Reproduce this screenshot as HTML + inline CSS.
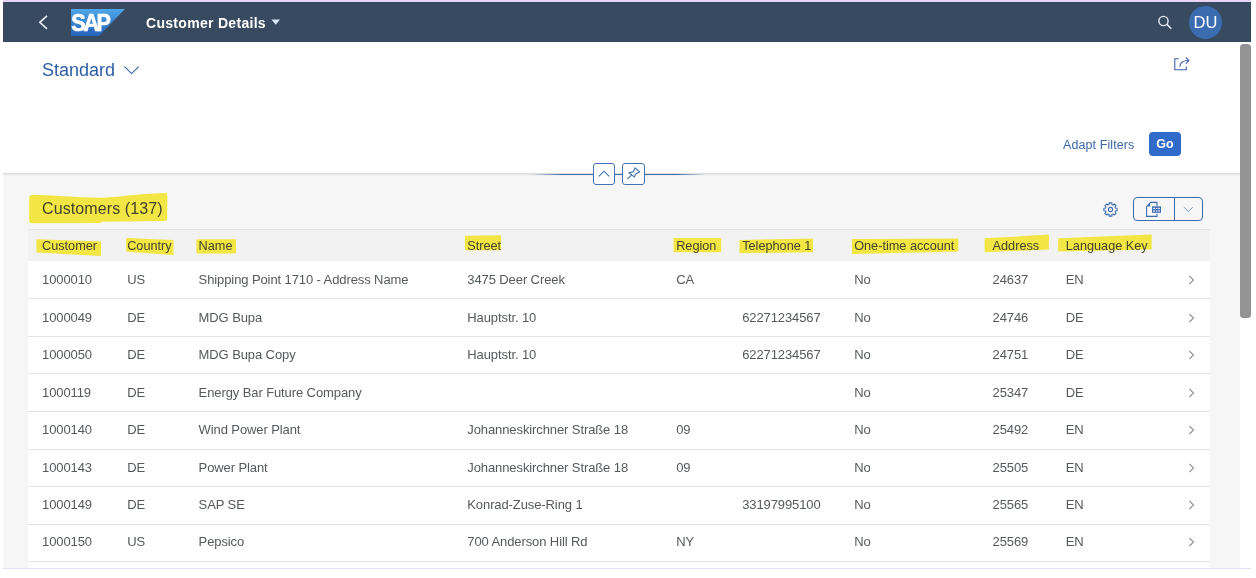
<!DOCTYPE html>
<html><head><meta charset="utf-8">
<style>
*{box-sizing:border-box;margin:0;padding:0}
html,body{will-change:transform;width:1256px;height:578px;overflow:hidden;background:#fff;font-family:"Liberation Sans",sans-serif;color:#32363a}
.abs{position:absolute}
#pink{left:3px;top:0;width:1248px;height:2px;background:#ebd3f6}
#shell{left:3px;top:2px;width:1248px;height:40px;background:#384a60}
#title{left:146px;top:14.5px;font-size:14px;font-weight:bold;color:#fff;white-space:nowrap;line-height:16px;letter-spacing:0.3px}
#avatar{left:1189px;top:6px;width:33px;height:33px;border-radius:50%;background:#3b6cb0;color:#fff;font-size:16.5px;text-align:center;line-height:33px}
#std{left:42px;top:60px;font-size:18px;color:#2d5ea8;line-height:20px;white-space:nowrap}
#adapt{left:1063px;top:138px;font-size:12.5px;color:#3d69aa;letter-spacing:0.1px;line-height:14px;white-space:nowrap}
#go{left:1149px;top:132px;width:32px;height:24px;border-radius:4px;background:#306bc9;color:#fff;font-weight:bold;font-size:12.5px;text-align:center;line-height:25.5px}
#gray{left:3px;top:174px;width:1237px;height:394px;background:#f6f6f6}
#shadow{left:3px;top:173.4px;width:1237px;height:2.6px;background:linear-gradient(#d9d9d9,#ececec 60%,#f5f5f5)}
#fline{left:500px;top:174px;width:240px;height:1px;background:linear-gradient(90deg,rgba(61,109,177,0) 30px,#3d6db1 62px,#3d6db1 176px,rgba(61,109,177,0) 206px)}
.sqbtn{width:22px;height:22.3px;border:1px solid #4672b4;border-radius:3px;background:#fff}
#scroll{left:1240px;top:43.5px;width:11px;height:274px;border-radius:3.5px;background:#939393}
#bline{left:3px;top:567.5px;width:1248px;height:1px;background:#dfe2f2}
.hl{background:#f2e644;border-radius:2px}
#ctitle{left:42px;top:199.6px;font-size:16px;color:#44422a;line-height:18px;white-space:nowrap;letter-spacing:0.1px}
#split{left:1132.5px;top:197.4px;width:70.5px;height:23.4px;border:1px solid #3d6db1;border-radius:4px}
#thead{background:#f2f2f2;border-top:1px solid #e5e5e5}
.row{left:28px;width:1182px;height:37.66px;background:#fff;border-bottom:1px solid #e5e5e5}
.c{position:absolute;top:0px;font-size:13px;letter-spacing:-0.1px;line-height:37px;white-space:nowrap;color:#56595c}
.h{font-size:12.7px;white-space:nowrap;color:#45432a;line-height:15px}
.chev{position:absolute;left:1159px;top:13px}
</style></head>
<body>
<div id="pink" class="abs"></div>
<div id="shell" class="abs"></div>
<!-- back chevron -->
<svg class="abs" style="left:36px;top:12px" width="16" height="20" viewBox="0 0 16 20"><path d="M11 3.8 L3.8 10.3 L11 16.8" fill="none" stroke="#e8eef8" stroke-width="1.6"/></svg>
<!-- SAP logo -->
<svg class="abs" style="left:71px;top:9px" width="55" height="28" viewBox="0 0 55 28">
<defs><linearGradient id="lg" x1="0" y1="0" x2="0" y2="1"><stop offset="0" stop-color="#4ea6e8"/><stop offset="1" stop-color="#2463b9"/></linearGradient></defs>
<path d="M0 0 H54 L28 27 H0 Z" fill="url(#lg)"/>
<text x="0.4" y="22.2" font-family="Liberation Sans" font-weight="bold" font-size="23.5" fill="#fff" stroke="#fff" stroke-width="0.7" letter-spacing="-2.6" transform="scale(0.92,1)">SAP</text>
</svg>
<div id="title" class="abs">Customer Details</div>
<svg class="abs" style="left:271px;top:19px" width="10" height="7" viewBox="0 0 10 7"><path d="M0.5 0.5 H9 L4.75 5.8 Z" fill="#d6e6fb"/></svg>
<!-- search -->
<svg class="abs" style="left:1155px;top:13px" width="20" height="20" viewBox="0 0 20 20"><circle cx="8.5" cy="8" r="4.6" fill="none" stroke="#e8eef8" stroke-width="1.4"/><path d="M11.8 11.3 L16.3 15.8" stroke="#e8eef8" stroke-width="1.6"/></svg>
<div id="avatar" class="abs">DU</div>

<!-- filter bar -->
<div id="std" class="abs">Standard</div>
<svg class="abs" style="left:122px;top:64px" width="20" height="13" viewBox="0 0 20 13"><path d="M2.5 2.6 L9.6 9.6 L16.7 2.6" fill="none" stroke="#2d5ea8" stroke-width="1.1"/></svg>
<!-- share icon -->
<svg class="abs" style="left:1170px;top:54px" width="22" height="20" viewBox="0 0 22 20"><g fill="none" stroke="#3a58ad" stroke-width="1.05"><path d="M8.5 4.8 H4.8 V15.8 H16.3 V12.4"/><path d="M9.8 12.8 C10 8.5 12.5 6.4 18.3 6.4"/><path d="M15.9 3.4 L18.9 6.4 L15.9 9.6"/></g></svg>
<div id="adapt" class="abs">Adapt Filters</div>
<div id="go" class="abs">Go</div>

<div id="gray" class="abs"></div>
<div id="shadow" class="abs"></div>
<div id="fline" class="abs"></div>
<div class="abs sqbtn" style="left:593px;top:162.5px"><svg width="21" height="21" viewBox="0 0 21 21" style="position:absolute;left:-1px;top:-1px"><path d="M5.8 13.3 L11 8.2 L16.2 13.3" fill="none" stroke="#3d6db1" stroke-width="1.1"/></svg></div>
<div class="abs" style="left:615px;top:174px;width:8px;height:1px;background:#3d6db1"></div>
<div class="abs sqbtn" style="left:622px;top:162.5px;width:22.7px"><svg width="22" height="22" viewBox="0 0 22 22" style="position:absolute;left:-1px;top:-1px"><path d="M5.4 16.2 L9.6 12.1" stroke="#3d6db1" stroke-width="1.1"/><path d="M6.9 9.8 L11.2 8.9 L13.1 4.8 L17.5 8.9 L13.7 11 L12.3 13.9 Z" fill="none" stroke="#3d6db1" stroke-width="1.1" stroke-linejoin="round"/></svg></div>
<div id="scroll" class="abs"></div>

<!-- table toolbar -->
<svg class="abs" style="left:0;top:0" width="200" height="240" viewBox="0 0 200 240"><path d="M29.2 197 Q29.6 195 32.5 194.8 C50 194.8 80 197.9 100 197.7 C118 197.5 135 193.6 165 192.9 Q167.3 193 167.3 195 L167.2 219.5 Q166.8 220.9 164.5 221 L101.5 221.8 L101 223.1 L32 223.3 Q29.3 223.2 29.2 221 Z" fill="#f2e644"/></svg>
<div id="ctitle" class="abs">Customers (137)</div>
<svg class="abs" style="left:1100px;top:199px" width="21" height="21" viewBox="0 0 21 21"><g fill="none" stroke="#3d6db1" stroke-width="1.1" stroke-linejoin="round"><circle cx="10.5" cy="10.5" r="2.1"/><path d="M9.07 5.50 L9.22 3.92 L11.78 3.92 L11.93 5.50 L13.02 5.95 L14.25 4.95 L16.05 6.75 L15.05 7.98 L15.50 9.07 L17.08 9.22 L17.08 11.78 L15.50 11.93 L15.05 13.02 L16.05 14.25 L14.25 16.05 L13.02 15.05 L11.93 15.50 L11.78 17.08 L9.22 17.08 L9.07 15.50 L7.98 15.05 L6.75 16.05 L4.95 14.25 L5.95 13.02 L5.50 11.93 L3.92 11.78 L3.92 9.22 L5.50 9.07 L5.95 7.98 L4.95 6.75 L6.75 4.95 L7.98 5.95 Z"/></g></svg>
<div id="split" class="abs"></div>
<div class="abs" style="left:1174px;top:198px;width:1px;height:22px;background:#3d6db1"></div>
<svg class="abs" style="left:1142px;top:199px" width="22" height="20" viewBox="0 0 22 20"><g fill="none" stroke="#3d6db1" stroke-width="1.1"><path d="M4.6 7.2 V17.4 H15 V14.8"/><path d="M8 3.4 H15 V7.4"/></g><path d="M4.1 7.6 L8.1 2.9 V7.6 Z" fill="#3d6db1"/><rect x="10" y="7.4" width="9" height="6.4" fill="#3d6db1"/><g fill="#dfe8f5"><rect x="11" y="8.8" width="2" height="1.3"/><rect x="13.8" y="8.8" width="1.6" height="1.3"/><rect x="16.2" y="8.8" width="1.8" height="1.3"/><rect x="11" y="11.3" width="2" height="1.3"/><rect x="13.8" y="11.3" width="1.6" height="1.3"/><rect x="16.2" y="11.3" width="1.8" height="1.3"/></g></svg>
<svg class="abs" style="left:1181px;top:203px" width="15" height="12" viewBox="0 0 15 12"><path d="M3 4.2 L7.35 8.6 L11.7 4.2" fill="none" stroke="#7a9ccc" stroke-width="1"/></svg>

<!-- TABLE START -->
<div id="thead" class="abs" style="left:28px;top:228.6px;width:1182px;height:32.15px"></div>
<svg class="abs" style="left:0;top:0" width="1256" height="300"><path d="M37.1 239.9 L100.3 242.1 L100.3 255.2 L37.1 251.9 Z M126.9 238.7 L172.8 240.7 L172.8 254.3 L126.9 251.0 Z M197.1 239.9 L235.3 239.9 L235.3 252.7 L197.1 252.7 Z M465.7 236.5 L500.3 235.9 L500.3 249.6 L465.7 249.6 Z M674.3 238.6 L720.5 238.6 L720.5 251.5 L674.3 251.5 Z M740.2 240.6 L812.3 239.1 L812.3 251.5 L740.2 252.5 Z M852.7 239.8 L957.6 239.1 L957.6 250.8 L852.7 253.2 Z M985.3 239.0 L1048.2 235.3 L1048.2 248.7 L985.3 251.6 Z M1058.9 239.0 L1151.0 235.3 L1151.0 248.7 L1058.9 250.9 Z" fill="#f2e644" stroke="#f2e644" stroke-width="1.4" stroke-linejoin="round"/></svg>
<div class="abs h" style="left:42px;top:239px">Customer</div>
<div class="abs h" style="left:127.2px;top:239px">Country</div>
<div class="abs h" style="left:198.6px;top:239px">Name</div>
<div class="abs h" style="left:467.3px;top:239px">Street</div>
<div class="abs h" style="left:676.2px;top:239px">Region</div>
<div class="abs h" style="left:742.2px;top:239px">Telephone 1</div>
<div class="abs h" style="left:854.2px;top:239px">One-time account</div>
<div class="abs h" style="left:992.6px;top:239px">Address</div>
<div class="abs h" style="left:1065.8px;top:239px">Language Key</div>
<div class="abs row" style="top:261.30px">
<div class="c" style="left:14.0px;top:-0.00px">1000010</div>
<div class="c" style="left:99.2px;top:-0.00px">US</div>
<div class="c" style="left:170.6px;top:-0.00px">Shipping Point 1710 - Address Name</div>
<div class="c" style="left:439.3px;top:-0.00px">3475 Deer Creek</div>
<div class="c" style="left:648.2px;top:-0.00px">CA</div>
<div class="c" style="left:826.2px;top:-0.00px">No</div>
<div class="c" style="left:964.6px;top:-0.00px">24637</div>
<div class="c" style="left:1037.8px;top:-0.00px">EN</div>
<svg class="chev" style="top:13.00px" width="10" height="12" viewBox="0 0 10 12"><path d="M2.5 2 L6.5 6 L2.5 10" fill="none" stroke="#909396" stroke-width="1.1"/></svg>
</div>
<div class="abs row" style="top:298.94px">
<div class="c" style="left:14.0px;top:-0.20px">1000049</div>
<div class="c" style="left:99.2px;top:-0.20px">DE</div>
<div class="c" style="left:170.6px;top:-0.20px">MDG Bupa</div>
<div class="c" style="left:439.3px;top:-0.20px">Hauptstr. 10</div>
<div class="c" style="left:714.2px;top:-0.20px">62271234567</div>
<div class="c" style="left:826.2px;top:-0.20px">No</div>
<div class="c" style="left:964.6px;top:-0.20px">24746</div>
<div class="c" style="left:1037.8px;top:-0.20px">DE</div>
<svg class="chev" style="top:12.80px" width="10" height="12" viewBox="0 0 10 12"><path d="M2.5 2 L6.5 6 L2.5 10" fill="none" stroke="#909396" stroke-width="1.1"/></svg>
</div>
<div class="abs row" style="top:336.58px">
<div class="c" style="left:14.0px;top:-0.40px">1000050</div>
<div class="c" style="left:99.2px;top:-0.40px">DE</div>
<div class="c" style="left:170.6px;top:-0.40px">MDG Bupa Copy</div>
<div class="c" style="left:439.3px;top:-0.40px">Hauptstr. 10</div>
<div class="c" style="left:714.2px;top:-0.40px">62271234567</div>
<div class="c" style="left:826.2px;top:-0.40px">No</div>
<div class="c" style="left:964.6px;top:-0.40px">24751</div>
<div class="c" style="left:1037.8px;top:-0.40px">DE</div>
<svg class="chev" style="top:12.60px" width="10" height="12" viewBox="0 0 10 12"><path d="M2.5 2 L6.5 6 L2.5 10" fill="none" stroke="#909396" stroke-width="1.1"/></svg>
</div>
<div class="abs row" style="top:374.22px">
<div class="c" style="left:14.0px;top:-0.60px">1000119</div>
<div class="c" style="left:99.2px;top:-0.60px">DE</div>
<div class="c" style="left:170.6px;top:-0.60px">Energy Bar Future Company</div>
<div class="c" style="left:826.2px;top:-0.60px">No</div>
<div class="c" style="left:964.6px;top:-0.60px">25347</div>
<div class="c" style="left:1037.8px;top:-0.60px">DE</div>
<svg class="chev" style="top:12.40px" width="10" height="12" viewBox="0 0 10 12"><path d="M2.5 2 L6.5 6 L2.5 10" fill="none" stroke="#909396" stroke-width="1.1"/></svg>
</div>
<div class="abs row" style="top:411.86px">
<div class="c" style="left:14.0px;top:-0.80px">1000140</div>
<div class="c" style="left:99.2px;top:-0.80px">DE</div>
<div class="c" style="left:170.6px;top:-0.80px">Wind Power Plant</div>
<div class="c" style="left:439.3px;top:-0.80px">Johanneskirchner Stra&szlig;e 18</div>
<div class="c" style="left:648.2px;top:-0.80px">09</div>
<div class="c" style="left:826.2px;top:-0.80px">No</div>
<div class="c" style="left:964.6px;top:-0.80px">25492</div>
<div class="c" style="left:1037.8px;top:-0.80px">EN</div>
<svg class="chev" style="top:12.20px" width="10" height="12" viewBox="0 0 10 12"><path d="M2.5 2 L6.5 6 L2.5 10" fill="none" stroke="#909396" stroke-width="1.1"/></svg>
</div>
<div class="abs row" style="top:449.50px">
<div class="c" style="left:14.0px;top:-1.00px">1000143</div>
<div class="c" style="left:99.2px;top:-1.00px">DE</div>
<div class="c" style="left:170.6px;top:-1.00px">Power Plant</div>
<div class="c" style="left:439.3px;top:-1.00px">Johanneskirchner Stra&szlig;e 18</div>
<div class="c" style="left:648.2px;top:-1.00px">09</div>
<div class="c" style="left:826.2px;top:-1.00px">No</div>
<div class="c" style="left:964.6px;top:-1.00px">25505</div>
<div class="c" style="left:1037.8px;top:-1.00px">EN</div>
<svg class="chev" style="top:12.00px" width="10" height="12" viewBox="0 0 10 12"><path d="M2.5 2 L6.5 6 L2.5 10" fill="none" stroke="#909396" stroke-width="1.1"/></svg>
</div>
<div class="abs row" style="top:487.14px">
<div class="c" style="left:14.0px;top:-1.20px">1000149</div>
<div class="c" style="left:99.2px;top:-1.20px">DE</div>
<div class="c" style="left:170.6px;top:-1.20px">SAP SE</div>
<div class="c" style="left:439.3px;top:-1.20px">Konrad-Zuse-Ring 1</div>
<div class="c" style="left:714.2px;top:-1.20px">33197995100</div>
<div class="c" style="left:826.2px;top:-1.20px">No</div>
<div class="c" style="left:964.6px;top:-1.20px">25565</div>
<div class="c" style="left:1037.8px;top:-1.20px">EN</div>
<svg class="chev" style="top:11.80px" width="10" height="12" viewBox="0 0 10 12"><path d="M2.5 2 L6.5 6 L2.5 10" fill="none" stroke="#909396" stroke-width="1.1"/></svg>
</div>
<div class="abs row" style="top:524.78px">
<div class="c" style="left:14.0px;top:-1.40px">1000150</div>
<div class="c" style="left:99.2px;top:-1.40px">US</div>
<div class="c" style="left:170.6px;top:-1.40px">Pepsico</div>
<div class="c" style="left:439.3px;top:-1.40px">700 Anderson Hill Rd</div>
<div class="c" style="left:648.2px;top:-1.40px">NY</div>
<div class="c" style="left:826.2px;top:-1.40px">No</div>
<div class="c" style="left:964.6px;top:-1.40px">25569</div>
<div class="c" style="left:1037.8px;top:-1.40px">EN</div>
<svg class="chev" style="top:11.60px" width="10" height="12" viewBox="0 0 10 12"><path d="M2.5 2 L6.5 6 L2.5 10" fill="none" stroke="#909396" stroke-width="1.1"/></svg>
</div>
<div class="abs" style="left:28px;top:562.42px;width:1182px;height:5.18px;background:#fff"></div>
<!-- TABLE END -->
<div id="bline" class="abs"></div>
</body></html>
